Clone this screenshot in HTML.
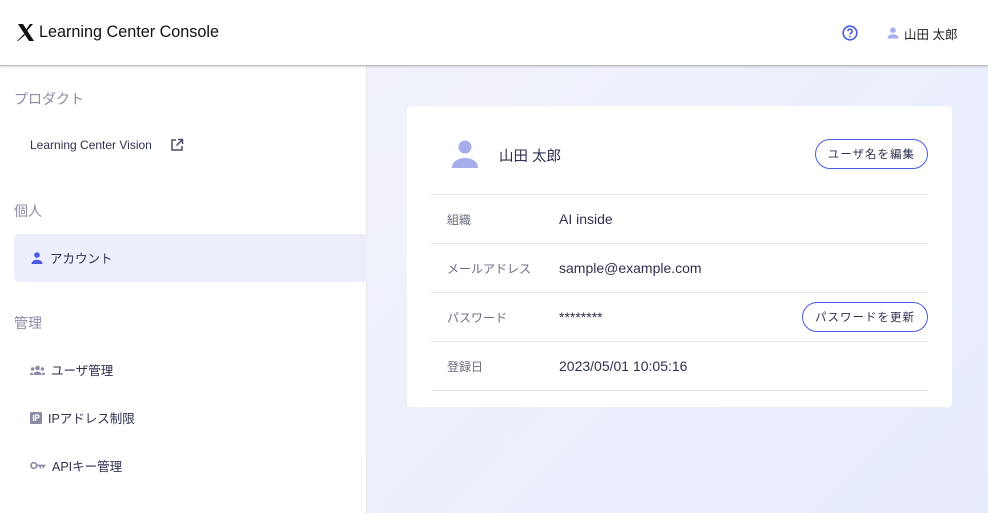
<!DOCTYPE html>
<html><head><meta charset="utf-8"><style>
*{box-sizing:border-box;margin:0;padding:0}
body{width:988px;height:513px;overflow:hidden;font-family:"Liberation Sans","Noto Sans CJK JP",sans-serif;background:#fff;position:relative;color:#2e3250}
.hdr{position:absolute;left:0;top:0;width:988px;height:66px;background:#fff;border-bottom:1px solid #b8bac4;box-shadow:0 1px 2px rgba(0,0,0,.15);z-index:2}
.side{position:absolute;left:0;top:66px;width:367px;height:447px;background:#fff;border-right:1px solid #e4e6ee}
.main{position:absolute;left:367px;top:66px;width:621px;height:447px;background:linear-gradient(135deg,#f1f2fb,#e7ecfc)}
.sec{position:absolute;left:14px;font-size:14px;color:#8a8ca3}
.item{position:absolute;left:30px;font-size:12.5px;color:#2e3250;display:flex;align-items:center;gap:6px}
.card{position:absolute;left:407px;top:106px;width:545px;height:301px;background:#fff;border-radius:4px}
.row{position:absolute;left:24px;width:497px;height:49px;border-top:1px solid #e3e4ee;display:flex;align-items:center}
.lbl{width:128px;padding-left:16px;font-size:12px;color:#6b6d80}
.val{font-size:14px;color:#2e3250}
.btn{position:absolute;right:0;border:1px solid #4b5ae0;border-radius:15px;height:30px;padding:0 12px;font-size:11.5px;letter-spacing:1px;display:flex;align-items:center;color:#2e3250;background:#fff}
</style></head><body>
<div class="hdr">
 <svg style="position:absolute;left:17px;top:23px" width="18" height="19" viewBox="0 0 18 19"><path d="M1 1 L12 18 L17 18 L6 1Z" fill="#111"/><path d="M13 1 L16 1 L9 9 L8 8Z" fill="#111"/><path d="M7 11 L8 12 L1 18 L0 18Z" fill="#111"/></svg>
 <div style="position:absolute;left:39px;top:23px;font-size:16.2px;color:#111">Learning Center Console</div>
 <svg style="position:absolute;left:842px;top:25px" width="16" height="16" viewBox="0 0 16 16"><circle cx="8" cy="8" r="6.8" fill="none" stroke="#4b5ae0" stroke-width="1.6"/><path d="M5.9 6.2a2.1 2.1 0 1 1 3 1.9c-.7.4-.9.8-.9 1.5" fill="none" stroke="#4b5ae0" stroke-width="1.5"/><circle cx="8" cy="11.6" r=".9" fill="#4b5ae0"/></svg>
 <svg style="position:absolute;left:887px;top:27px" width="12" height="12" viewBox="0 0 12 12"><circle cx="6" cy="3.2" r="2.7" fill="#a7acea"/><path d="M0.5 11.5c0-3 3-4.2 5.5-4.2s5.5 1.2 5.5 4.2z" fill="#a7acea"/></svg>
 <div style="position:absolute;left:904px;top:24px;font-size:12.5px;color:#222">山田 太郎</div>
</div>
<div class="side">
 <div class="sec" style="top:23px">プロダクト</div>
 <div class="item" style="top:72px;font-size:12px">Learning Center Vision <svg style="margin-left:12px" width="14" height="14" viewBox="0 0 14 14"><path d="M6 2H2v10h10V8" fill="none" stroke="#4a4d66" stroke-width="1.5"/><path d="M8 1.5h4.5V6M12.5 1.5L6.5 7.5" fill="none" stroke="#4a4d66" stroke-width="1.5"/></svg></div>
 <div class="sec" style="top:135px">個人</div>
 <div style="position:absolute;left:14px;top:168px;width:353px;height:48px;background:#edeefb;border-radius:6px 0 0 6px"></div>
 <div class="item" style="top:182px"><svg width="14" height="12" viewBox="0 0 14 12"><circle cx="7" cy="3" r="2.8" fill="#4b5ae0"/><path d="M1.5 12c0-3 3-4.3 5.5-4.3s5.5 1.3 5.5 4.3z" fill="#4b5ae0"/></svg>アカウント</div>
 <div class="sec" style="top:247px">管理</div>
 <div class="item" style="top:294px"><svg width="15" height="10" viewBox="0 0 15 10"><circle cx="7.5" cy="3" r="2.3" fill="#8a8ca3"/><circle cx="2.6" cy="4" r="1.7" fill="#8a8ca3"/><circle cx="12.4" cy="4" r="1.7" fill="#8a8ca3"/><path d="M3.5 10c0-2.5 2-3.5 4-3.5s4 1 4 3.5zM0 10c0-1.8 1-2.5 2.6-2.5L3 10zM15 10c0-1.8-1-2.5-2.6-2.5L12 10z" fill="#8a8ca3"/></svg>ユーザ管理</div>
 <div class="item" style="top:342px"><svg width="12" height="12" viewBox="0 0 12 12"><rect width="12" height="12" rx="1.5" fill="#8a8ca3"/><path d="M3.5 3v6M5.5 9V3h2a1.5 1.5 0 0 1 0 3h-2" stroke="#fff" stroke-width="1.3" fill="none"/></svg>IPアドレス制限</div>
 <div class="item" style="top:390px"><svg width="16" height="9" viewBox="0 0 16 9"><circle cx="3.8" cy="4.5" r="2.8" fill="none" stroke="#8a8ca3" stroke-width="1.7"/><path d="M6.5 3.6h9v1.8h-1.5v2h-1.6v-2H11v2H9.5v-2h-3z" fill="#8a8ca3"/></svg>APIキー管理</div>
</div>
<div class="main"></div>
<div class="card">
 <svg style="position:absolute;left:44px;top:34px" width="28" height="28" viewBox="0 0 28 28"><circle cx="14" cy="7" r="6.5" fill="#a7acea"/><path d="M1 28c0-7 7-10 13-10s13 3 13 10z" fill="#a7acea"/></svg>
 <div style="position:absolute;left:92px;top:39px;font-size:14.5px">山田 太郎</div>
 <div style="position:absolute;left:24px;top:33px;width:497px;height:30px"><div class="btn" style="top:0">ユーザ名を編集</div></div>
 <div class="row" style="top:88px"><div class="lbl">組織</div><div class="val">AI inside</div></div>
 <div class="row" style="top:137px"><div class="lbl">メールアドレス</div><div class="val">sample@example.com</div></div>
 <div class="row" style="top:186px"><div class="lbl">パスワード</div><div class="val">********</div><div class="btn" style="top:9px">パスワードを更新</div></div>
 <div class="row" style="top:235px;border-bottom:1px solid #e3e4ee;height:50px"><div class="lbl">登録日</div><div class="val">2023/05/01 10:05:16</div></div>
</div>
</body></html>
